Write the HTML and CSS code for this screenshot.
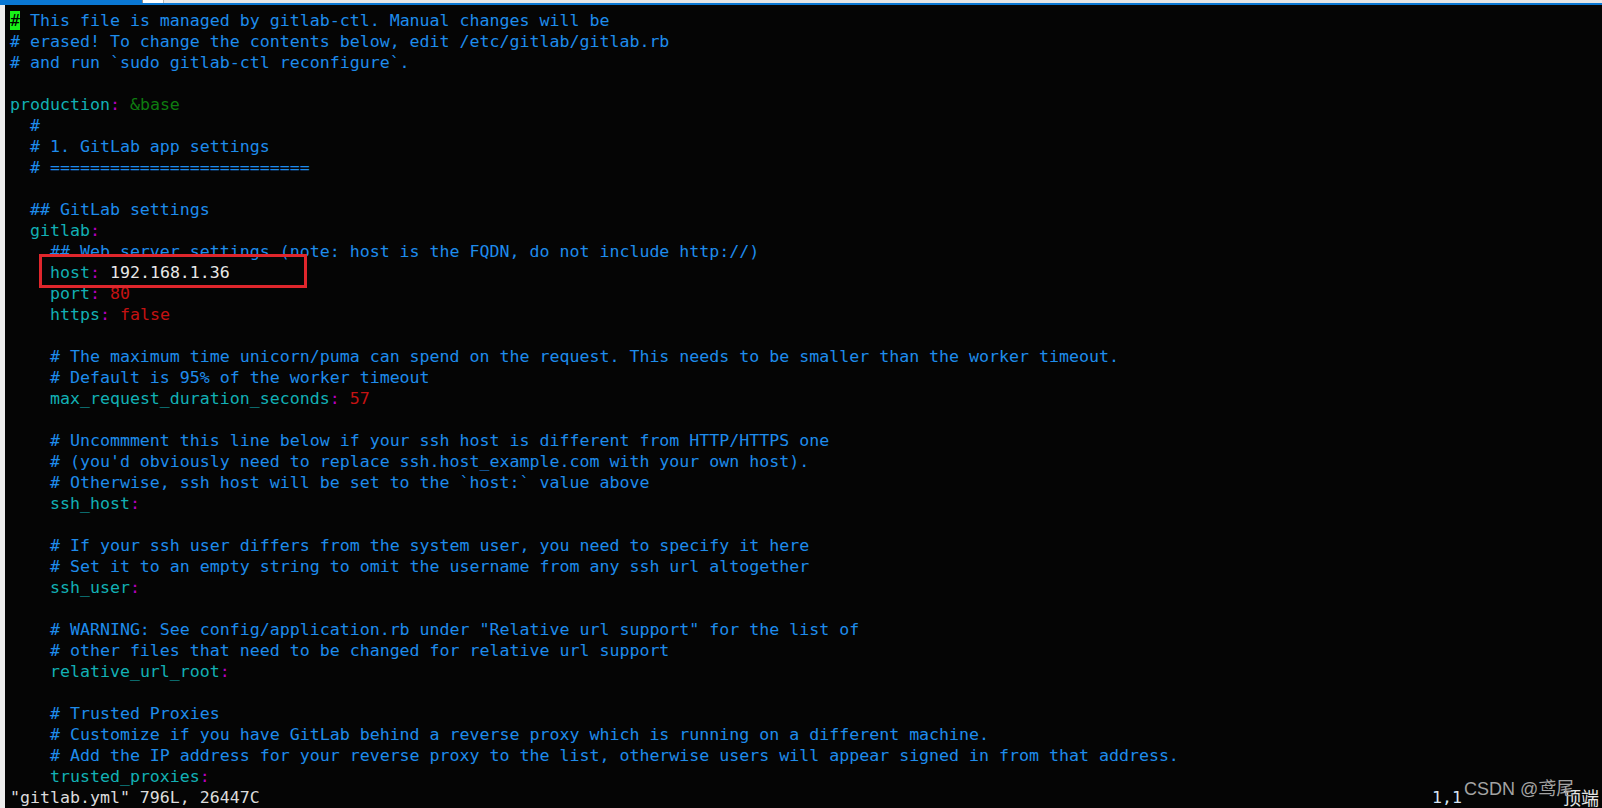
FILE: index.html
```html
<!DOCTYPE html>
<html>
<head>
<meta charset="utf-8">
<link rel="stylesheet" href="styles.css">
</head>
<body>
<div class="window">
  <div class="tabbar">
    <div class="tab-active"></div>
    <div class="tab-small"></div>
    <div class="tab-rest"></div>
  </div>
  <div class="accent"></div>
  <div class="main">
    <div class="gutter"></div>
    <div class="screen">
      <div class="ln"><span class="cursor">#</span><span class="c"> This file is managed by gitlab-ctl. Manual changes will be</span></div>
      <div class="ln c"># erased! To change the contents below, edit /etc/gitlab/gitlab.rb</div>
      <div class="ln c"># and run `sudo gitlab-ctl reconfigure`.</div>
      <div class="ln"> </div>
      <div class="ln"><span class="k">production</span><span class="p">:</span> <span class="g">&amp;base</span></div>
      <div class="ln c">  #</div>
      <div class="ln c">  # 1. GitLab app settings</div>
      <div class="ln c">  # ==========================</div>
      <div class="ln"> </div>
      <div class="ln c">  ## GitLab settings</div>
      <div class="ln">  <span class="k">gitlab</span><span class="p">:</span></div>
      <div class="ln c">    ## Web server settings (note: host is the FQDN, do not include http://)</div>
      <div class="ln">    <span class="k">host</span><span class="p">:</span> <span class="v">192.168.1.36</span></div>
      <div class="ln">    <span class="k">port</span><span class="p">:</span> <span class="r">80</span></div>
      <div class="ln">    <span class="k">https</span><span class="p">:</span> <span class="r">false</span></div>
      <div class="ln"> </div>
      <div class="ln c">    # The maximum time unicorn/puma can spend on the request. This needs to be smaller than the worker timeout.</div>
      <div class="ln c">    # Default is 95% of the worker timeout</div>
      <div class="ln">    <span class="k">max_request_duration_seconds</span><span class="p">:</span> <span class="r">57</span></div>
      <div class="ln"> </div>
      <div class="ln c">    # Uncommment this line below if your ssh host is different from HTTP/HTTPS one</div>
      <div class="ln c">    # (you'd obviously need to replace ssh.host_example.com with your own host).</div>
      <div class="ln c">    # Otherwise, ssh host will be set to the `host:` value above</div>
      <div class="ln">    <span class="k">ssh_host</span><span class="p">:</span></div>
      <div class="ln"> </div>
      <div class="ln c">    # If your ssh user differs from the system user, you need to specify it here</div>
      <div class="ln c">    # Set it to an empty string to omit the username from any ssh url altogether</div>
      <div class="ln">    <span class="k">ssh_user</span><span class="p">:</span></div>
      <div class="ln"> </div>
      <div class="ln c">    # WARNING: See config/application.rb under "Relative url support" for the list of</div>
      <div class="ln c">    # other files that need to be changed for relative url support</div>
      <div class="ln">    <span class="k">relative_url_root</span><span class="p">:</span></div>
      <div class="ln"> </div>
      <div class="ln c">    # Trusted Proxies</div>
      <div class="ln c">    # Customize if you have GitLab behind a reverse proxy which is running on a different machine.</div>
      <div class="ln c">    # Add the IP address for your reverse proxy to the list, otherwise users will appear signed in from that address.</div>
      <div class="ln">    <span class="k">trusted_proxies</span><span class="p">:</span></div>
      <div class="ln status">
        <span class="fileinfo">"gitlab.yml" 796L, 26447C</span>
        <span class="ruler">1,1</span>
        <span class="pos">顶端</span>
      </div>
      <div class="highlight-box"></div>
      <div class="watermark">CSDN @鸢尾</div>
    </div>
  </div>
</div>
</body>
</html>
```
FILE: styles.css
```css
html, body {
  margin: 0;
  padding: 0;
  background: #050505;
}
.window {
  width: 1602px;
  height: 808px;
  overflow: hidden;
  display: flex;
  flex-direction: column;
}
.tabbar {
  height: 3px;
  display: flex;
  background: #e6e6e6;
}
.tab-active {
  width: 142px;
  background: #0a78d4;
}
.tab-small {
  width: 20px;
  background: #ffffff;
  border-left: 1px solid #8a8a8a;
  border-right: 1px solid #b5b5b5;
}
.tab-rest {
  flex: 1;
  background: #e6e6e6;
}
.accent {
  height: 2px;
  background: #0a78d4;
}
.main {
  flex: 1;
  display: flex;
}
.gutter {
  width: 5px;
  background: #eeeeee;
}
.screen {
  flex: 1;
  position: relative;
  background: #050505;
  padding: 5px 0 0 5px;
  font-family: "DejaVu Sans Mono", monospace;
  font-size: 16.6px;
  line-height: 21px;
  color: #d8d8d8;
}
.ln {
  white-space: pre;
  height: 21px;
}
.c { color: #1e8cec; }
.k { color: #12b0b4; }
.p { color: #b800c0; }
.g { color: #0e7c10; }
.r { color: #c41212; }
.v { color: #e8e8e8; }
.cursor {
  background: #18f018;
  color: #000000;
}
.status {
  display: flex;
  color: #dcdcdc;
}
.fileinfo {
  width: 1422px;
  flex: none;
}
.ruler {
  width: 131px;
  flex: none;
  color: #d6e4f2;
}
.pos {
  font-family: "Noto Sans CJK SC", sans-serif;
  color: #e4e4e4;
  font-size: 18px;
}
.highlight-box {
  position: absolute;
  left: 34px;
  top: 249px;
  width: 268px;
  height: 34px;
  border: 3px solid #e0262c;
  box-sizing: border-box;
}
.watermark {
  position: absolute;
  left: 1459px;
  top: 772px;
  font-family: "Liberation Sans", "Noto Sans CJK SC", sans-serif;
  font-size: 18px;
  line-height: 24px;
  color: #a3a3a3;
  white-space: nowrap;
}
```
